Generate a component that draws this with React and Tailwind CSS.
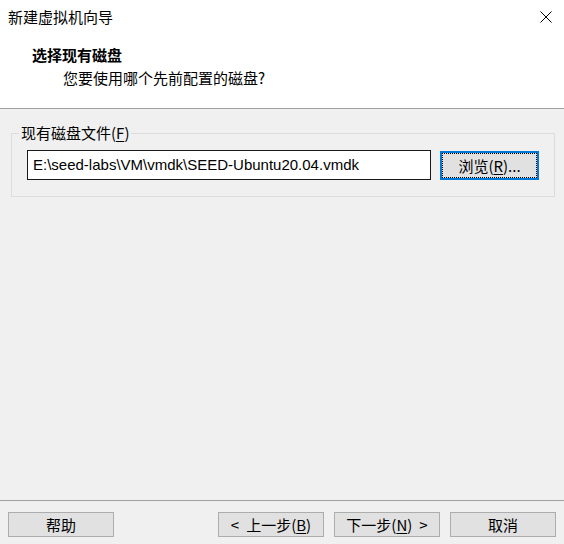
import { useState } from 'react';

const cjk = { fontFamily: '"Noto Sans CJK SC", "Noto Sans", sans-serif' };
const latin = { fontFamily: '"Liberation Sans", "Noto Sans CJK SC", sans-serif' };

// Accelerator key shown with an underline, e.g. (F)
const Key = ({ k }) => (
  <span>
    (<span className="underline underline-offset-2">{k}</span>)
  </span>
);

const WizardButton = ({ children, className = '' }) => (
  <button
    className={`h-[25px] w-[106px] border border-[#adadad] bg-[#e1e1e1] text-[15px] leading-[20px] text-black flex items-center justify-center ${className}`}
    style={cjk}
  >
    {children}
  </button>
);

const App = () => {
  const [diskPath, setDiskPath] = useState('E:\\seed-labs\\VM\\vmdk\\SEED-Ubuntu20.04.vmdk');

  return (
    <div className="w-[564px] h-[544px] flex flex-col bg-[#f0f0f0] text-black select-none" style={cjk}>
      {/* Title bar + header */}
      <div className="bg-white h-[109px] border-b border-[#a0a0a0] flex flex-col">
        <div className="h-[34px] flex items-center justify-between pl-2 pr-3">
          <span className="text-[15px] leading-[20px]">新建虚拟机向导</span>
          <svg width="12" height="12" viewBox="0 0 12 12">
            <path d="M0.5 0.5 L11.5 11.5 M11.5 0.5 L0.5 11.5" stroke="#000" strokeWidth="1" fill="none" />
          </svg>
        </div>
        <div className="pl-[32px] mt-[11px] text-[15px] leading-[20px] font-bold">选择现有磁盘</div>
        <div className="pl-[63px] mt-[3px] text-[15px] leading-[20px]">您要使用哪个先前配置的磁盘?</div>
      </div>

      {/* Body */}
      <div className="flex-1 pt-[14px]">
        <fieldset className="ml-[11px] mr-[9px] border border-[#dcdcdc] pb-[16px]">
          <legend className="ml-[7px] px-[2px] text-[15px] leading-[20px]">
            现有磁盘文件<Key k="F" />
          </legend>
          <div className="mt-[7px] pl-[15px] flex items-start">
            <input
              value={diskPath}
              onChange={(e) => setDiskPath(e.target.value)}
              className="w-[404px] h-[30px] border border-[#1a1a1a] bg-white px-[5px] pb-[2px] text-[15px] outline-none"
              style={latin}
            />
            <button className="ml-[9px] mt-[1px] w-[99px] h-[29px] border-2 border-[#0078d7] bg-[#e1e1e1] p-0">
              <div className="w-full h-full border border-dotted border-black flex items-center justify-center text-[15px] leading-[20px]">
                浏览<Key k="R" />...
              </div>
            </button>
          </div>
        </fieldset>
      </div>

      {/* Footer buttons */}
      <div className="border-t border-[#a0a0a0] pt-[11px] pb-[7px] px-2 flex items-center">
        <WizardButton>帮助</WizardButton>
        <div className="flex-1" />
        <WizardButton>
          <span className="mr-[7px]">&lt;</span>上一步<Key k="B" />
        </WizardButton>
        <WizardButton className="ml-[10px]">
          下一步<Key k="N" />
          <span className="ml-[7px]">&gt;</span>
        </WizardButton>
        <WizardButton className="ml-[10px]">取消</WizardButton>
      </div>
    </div>
  );
};

export default App;
